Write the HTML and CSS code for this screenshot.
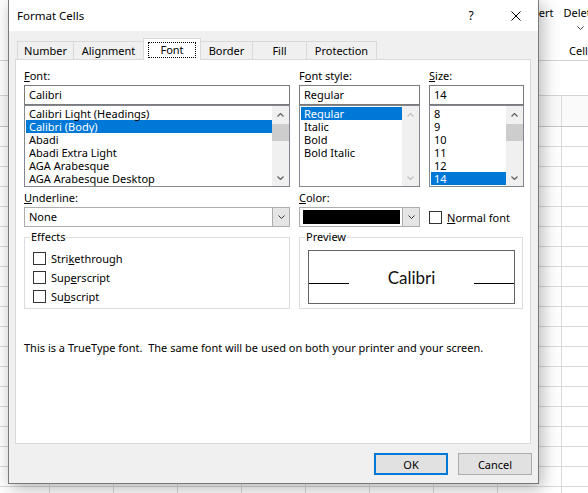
FILE: index.html
```html
<!DOCTYPE html>
<html lang="en">
<head>
    <meta charset="UTF-8">
    <meta name="viewport" content="width=device-width, initial-scale=1.0">
    <title>Format Cells</title>
    <link rel="stylesheet" href="styles.css">
</head>
<body>
    <!-- spreadsheet behind the dialog -->
    <div class="excel">
        <div class="ribbon">
            <div class="ribbon-group">
                <div class="ribbon-cmds">
                    <span class="cmd">Insert</span>
                    <span class="cmd">Delete
                        <svg class="cmd-arrow" width="7" height="4" viewBox="0 0 7 4"><path d="M0.5 0.5 L3.5 3.5 L6.5 0.5" fill="none" stroke="#444" stroke-width="1"/></svg>
                    </span>
                </div>
                <div class="ribbon-label">Cells</div>
            </div>
        </div>
        <div class="formula-bar"></div>
        <div class="col-heads"></div>
        <div class="sheet"></div>
    </div>

    <div class="dialog">
        <div class="titlebar">
            <span class="title">Format Cells</span>
            <span class="tb-btn tb-help">?</span>
            <span class="tb-btn tb-close">
                <svg width="10" height="10" viewBox="0 0 10 10"><path d="M0.5 0.5 L9.5 9.5 M9.5 0.5 L0.5 9.5" stroke="#000" stroke-width="1"/></svg>
            </span>
        </div>

        <div class="dlg-body">
            <div class="tabs">
                <div class="tab tab-number">Number</div>
                <div class="tab tab-align">Alignment</div>
                <div class="tab tab-font active"><span class="focus">Font</span></div>
                <div class="tab tab-border">Border</div>
                <div class="tab tab-fill">Fill</div>
                <div class="tab tab-prot">Protection</div>
            </div>

            <div class="panel">
                <div class="font-grid">
                    <div class="field">
                        <label class="lbl"><u>F</u>ont:</label>
                        <div class="textbox">Calibri</div>
                        <div class="listbox">
                            <ul class="items">
                                <li>Calibri Light (Headings)</li>
                                <li class="sel">Calibri (Body)</li>
                                <li>Abadi</li>
                                <li>Abadi Extra Light</li>
                                <li>AGA Arabesque</li>
                                <li>AGA Arabesque Desktop</li>
                            </ul>
                            <div class="vscroll">
                                <span class="sb-btn"><svg width="7" height="4" viewBox="0 0 7 4"><path d="M0.5 3.5 L3.5 0.5 L6.5 3.5" fill="none" stroke="#606060" stroke-width="1.2"/></svg></span>
                                <span class="sb-thumb"></span>
                                <span class="sb-btn sb-down"><svg width="7" height="4" viewBox="0 0 7 4"><path d="M0.5 0.5 L3.5 3.5 L6.5 0.5" fill="none" stroke="#606060" stroke-width="1.2"/></svg></span>
                            </div>
                        </div>
                    </div>

                    <div class="field">
                        <label class="lbl">F<u>o</u>nt style:</label>
                        <div class="textbox">Regular</div>
                        <div class="listbox">
                            <ul class="items">
                                <li class="sel">Regular</li>
                                <li>Italic</li>
                                <li>Bold</li>
                                <li>Bold Italic</li>
                            </ul>
                            <div class="vscroll disabled">
                                <span class="sb-btn"><svg width="7" height="4" viewBox="0 0 7 4"><path d="M0.5 3.5 L3.5 0.5 L6.5 3.5" fill="none" stroke="#c0c0c0" stroke-width="1.2"/></svg></span>
                                <span class="sb-btn sb-down"><svg width="7" height="4" viewBox="0 0 7 4"><path d="M0.5 0.5 L3.5 3.5 L6.5 0.5" fill="none" stroke="#c0c0c0" stroke-width="1.2"/></svg></span>
                            </div>
                        </div>
                    </div>

                    <div class="field">
                        <label class="lbl"><u>S</u>ize:</label>
                        <div class="textbox">14</div>
                        <div class="listbox">
                            <ul class="items">
                                <li>8</li>
                                <li>9</li>
                                <li>10</li>
                                <li>11</li>
                                <li>12</li>
                                <li class="sel">14</li>
                            </ul>
                            <div class="vscroll">
                                <span class="sb-btn"><svg width="7" height="4" viewBox="0 0 7 4"><path d="M0.5 3.5 L3.5 0.5 L6.5 3.5" fill="none" stroke="#606060" stroke-width="1.2"/></svg></span>
                                <span class="sb-thumb"></span>
                                <span class="sb-btn sb-down"><svg width="7" height="4" viewBox="0 0 7 4"><path d="M0.5 0.5 L3.5 3.5 L6.5 0.5" fill="none" stroke="#606060" stroke-width="1.2"/></svg></span>
                            </div>
                        </div>
                    </div>

                    <div class="field">
                        <label class="lbl"><u>U</u>nderline:</label>
                        <div class="combo">
                            <span class="combo-text">None</span>
                            <span class="combo-btn"><svg width="7" height="4" viewBox="0 0 7 4"><path d="M0.5 0.5 L3.5 3.5 L6.5 0.5" fill="none" stroke="#333" stroke-width="1"/></svg></span>
                        </div>
                    </div>

                    <div class="field">
                        <label class="lbl"><u>C</u>olor:</label>
                        <div class="combo">
                            <span class="swatch"></span>
                            <span class="combo-btn"><svg width="7" height="4" viewBox="0 0 7 4"><path d="M0.5 0.5 L3.5 3.5 L6.5 0.5" fill="none" stroke="#333" stroke-width="1"/></svg></span>
                        </div>
                    </div>

                    <div class="normal-font">
                        <span class="check"></span>
                        <span><u>N</u>ormal font</span>
                    </div>

                    <fieldset class="group effects">
                        <legend>Effects</legend>
                        <div class="check-row"><span class="check"></span><span>Stri<u>k</u>ethrough</span></div>
                        <div class="check-row"><span class="check"></span><span>Sup<u>e</u>rscript</span></div>
                        <div class="check-row"><span class="check"></span><span>Su<u>b</u>script</span></div>
                    </fieldset>

                    <fieldset class="group preview">
                        <legend>Preview</legend>
                        <div class="preview-box">
                            <span class="base-line"></span>
                            <span class="preview-text">Calibri</span>
                            <span class="base-line"></span>
                        </div>
                    </fieldset>
                </div>

                <p class="note">This is a TrueType font.&nbsp; The same font will be used on both your printer and your screen.</p>
            </div>

            <div class="buttons">
                <button class="btn btn-default">OK</button>
                <button class="btn">Cancel</button>
            </div>
        </div>
    </div>
</body>
</html>
```

FILE: styles.css
```css
* {
    box-sizing: border-box;
}
body {
    margin: 0;
    width: 588px;
    height: 493px;
    overflow: hidden;
    position: relative;
    background-color: #fff;
    font-family: "Noto Sans", "Segoe UI", sans-serif;
    font-size: 11px;
    color: #000;
}

/* spreadsheet background */
.excel {
    display: flex;
    flex-direction: column;
    height: 100%;
}
.ribbon {
    height: 61px;
    border-bottom: 1px solid #d2d2d2;
    background-color: #fff;
    overflow: hidden;
}
.ribbon-group {
    margin-left: 523px;
    width: 100px;
    padding-top: 5px;
    white-space: nowrap;
}
.ribbon-cmds {
    display: flex;
    gap: 10px;
    line-height: 16px;
}
.cmd {
    display: flex;
    flex-direction: column;
    align-items: center;
}
.cmd-arrow {
    margin-top: 5px;
}
.ribbon-label {
    margin-left: 46px;
    margin-top: 13px;
    line-height: 16px;
}
.formula-bar {
    height: 35px;
    border-bottom: 1px solid #d5d5d5;
}
.col-heads {
    height: 31px;
    border-bottom: 1px solid #c8c8c8;
    background-color: #fafafa;
    background-image: linear-gradient(to right, transparent 63px, #dadada 63px);
    background-size: 64px 100%;
    background-position: 50px 0;
}
.sheet {
    flex: 1;
    background-image:
        linear-gradient(to right, transparent 63px, #dadada 63px),
        linear-gradient(to bottom, transparent 19px, #dadada 19px);
    background-size: 64px 20px;
    background-position: 50px 0;
}

/* dialog window */
.dialog {
    position: absolute;
    left: 8px;
    top: -1px;
    width: 531px;
    border: 1px solid #7a7a7a;
    background-color: #f0f0f0;
    box-shadow: 3px 4px 16px rgba(0, 0, 0, 0.3);
}
.titlebar {
    height: 31px;
    background-color: #fff;
    display: flex;
    align-items: center;
    padding-left: 8px;
}
.title {
    flex: 1;
    font-size: 11.5px;
}
.tb-btn {
    height: 31px;
    display: flex;
    align-items: center;
    justify-content: center;
}
.tb-help {
    width: 46px;
    font-size: 12px;
}
.tb-close {
    width: 44px;
}
.dlg-body {
    padding: 7px 7px 8px 6px;
}

/* tabs */
.tabs {
    display: flex;
    align-items: flex-end;
    height: 21px;
    padding-left: 2px;
}
.tab {
    height: 18px;
    border: 1px solid #d9d9d9;
    border-bottom: 0;
    margin-right: -1px;
    padding-top: 1px;
    line-height: 15px;
    text-align: center;
    background-color: #f0f0f0;
}
.tab-number { width: 57px; }
.tab-align { width: 71px; }
.tab-font { width: 58px; }
.tab-border { width: 53px; }
.tab-fill { width: 55px; }
.tab-prot { width: 71px; }
.tab.active {
    position: relative;
    z-index: 1;
    height: 22px;
    margin-bottom: -1px;
    padding-top: 0;
    background-color: #fff;
}
.focus {
    display: block;
    height: 16px;
    margin: 3px 4px 0;
    border: 1px dotted #000;
    line-height: 14px;
}

/* font page */
.panel {
    height: 385px;
    border: 1px solid #d9d9d9;
    background-color: #fff;
    padding: 8px 6px 0 8px;
}
.font-grid {
    display: grid;
    grid-template-columns: 266px 121px 95px;
    column-gap: 9px;
    row-gap: 3px;
}
.field {
    display: flex;
    flex-direction: column;
}
.lbl {
    line-height: 15px;
    margin-bottom: 2px;
}
.textbox {
    height: 20px;
    border: 1px solid #7a7a7a;
    padding-left: 4px;
    line-height: 18px;
}
.listbox {
    height: 82px;
    border: 1px solid #828790;
    display: flex;
}
.items {
    flex: 1;
    list-style: none;
    margin: 0;
    padding: 1px 0 0 1px;
}
.items li {
    height: 13px;
    line-height: 13px;
    padding-left: 3px;
    white-space: nowrap;
}
.items li.sel {
    background-color: #0078d7;
    color: #fff;
}
.vscroll {
    width: 17px;
    background-color: #f0f0f0;
    display: flex;
    flex-direction: column;
}
.sb-btn {
    height: 17px;
    display: flex;
    align-items: center;
    justify-content: center;
}
.sb-thumb {
    height: 17px;
    margin-top: 1px;
    background-color: #cdcdcd;
}
.sb-down {
    margin-top: auto;
}
.combo {
    height: 20px;
    border: 1px solid #adadad;
    background-color: #fff;
    display: flex;
}
.combo-text {
    flex: 1;
    padding-left: 4px;
    line-height: 18px;
}
.combo-btn {
    width: 17px;
    border-left: 1px solid #adadad;
    background-color: #e5e5e5;
    display: flex;
    align-items: center;
    justify-content: center;
}
.swatch {
    flex: 1;
    margin: 2px 2px 2px 3px;
    background-color: #000;
}
.normal-font {
    align-self: end;
    height: 20px;
    display: flex;
    align-items: center;
    gap: 5px;
}
.check {
    width: 13px;
    height: 13px;
    border: 1px solid #333;
    background-color: #fff;
}

/* group boxes */
.group {
    margin: 0;
    padding: 5px 8px 2px;
    border: 1px solid #dcdcdc;
}
.group legend {
    margin-left: -3px;
    padding: 0 1px;
    line-height: 14px;
}
.check-row {
    height: 19px;
    display: flex;
    align-items: center;
    gap: 5px;
}
.preview {
    grid-column: span 2;
    margin-right: 1px;
    padding: 6px 7px 4px 8px;
}
.preview-box {
    height: 54px;
    border: 1px solid #646464;
    display: flex;
    align-items: center;
    justify-content: space-between;
}
.base-line {
    width: 40px;
    height: 1px;
    margin-top: 13px;
    background-color: #000;
}
.preview-text {
    font-family: Lato, "Noto Sans", sans-serif;
    font-size: 17px;
    color: #111;
}
.note {
    margin: 32px 0 0;
    line-height: 14px;
}

/* buttons */
.buttons {
    display: flex;
    justify-content: flex-end;
    gap: 10px;
    margin-top: 9px;
    margin-right: -1px;
}
.btn {
    width: 74px;
    height: 22px;
    border: 1px solid #adadad;
    background-color: #e1e1e1;
    font-family: inherit;
    font-size: 11px;
    color: #000;
    padding: 0;
}
.btn-default {
    border: 2px solid #0078d7;
}
```
